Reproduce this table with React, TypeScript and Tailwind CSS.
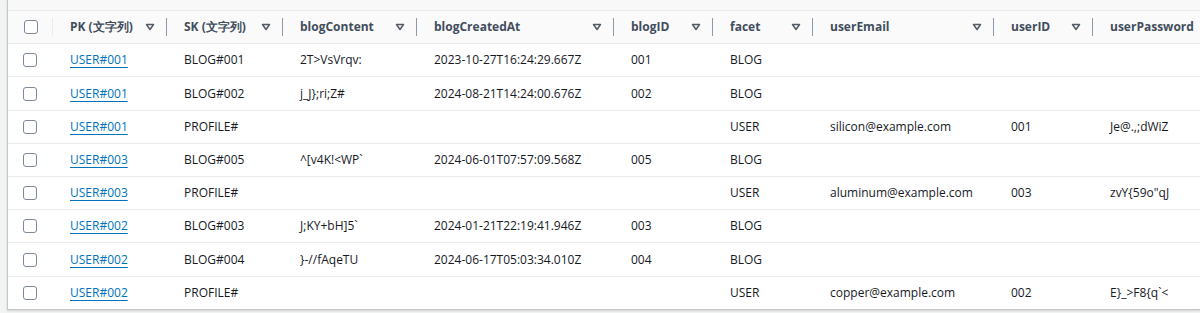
const cols = [
  { key: 'pk', label: 'PK (文字列)', w: 114 },
  { key: 'sk', label: 'SK (文字列)', w: 116 },
  { key: 'blogContent', label: 'blogContent', w: 134 },
  { key: 'blogCreatedAt', label: 'blogCreatedAt', w: 197 },
  { key: 'blogID', label: 'blogID', w: 99 },
  { key: 'facet', label: 'facet', w: 100 },
  { key: 'userEmail', label: 'userEmail', w: 181 },
  { key: 'userID', label: 'userID', w: 99 },
  { key: 'userPassword', label: 'userPassword', w: 160 },
]

const rows: Record<string, string>[] = [
  { pk: 'USER#001', sk: 'BLOG#001', blogContent: '2T>VsVrqv:', blogCreatedAt: '2023-10-27T16:24:29.667Z', blogID: '001', facet: 'BLOG' },
  { pk: 'USER#001', sk: 'BLOG#002', blogContent: 'j_J};ri;Z#', blogCreatedAt: '2024-08-21T14:24:00.676Z', blogID: '002', facet: 'BLOG' },
  { pk: 'USER#001', sk: 'PROFILE#', facet: 'USER', userEmail: 'silicon@example.com', userID: '001', userPassword: 'Je@.,;dWiZ' },
  { pk: 'USER#003', sk: 'BLOG#005', blogContent: '^[v4K!<WP`', blogCreatedAt: '2024-06-01T07:57:09.568Z', blogID: '005', facet: 'BLOG' },
  { pk: 'USER#003', sk: 'PROFILE#', facet: 'USER', userEmail: 'aluminum@example.com', userID: '003', userPassword: 'zvY{59o"qJ' },
  { pk: 'USER#002', sk: 'BLOG#003', blogContent: 'J;KY+bH]5`', blogCreatedAt: '2024-01-21T22:19:41.946Z', blogID: '003', facet: 'BLOG' },
  { pk: 'USER#002', sk: 'BLOG#004', blogContent: '}-//fAqeTU', blogCreatedAt: '2024-06-17T05:03:34.010Z', blogID: '004', facet: 'BLOG' },
  { pk: 'USER#002', sk: 'PROFILE#', facet: 'USER', userEmail: 'copper@example.com', userID: '002', userPassword: 'E}_>F8{q`<' },
]

// row heights, measured off the screenshot
const rowH = ['h-[33px]', 'h-[34px]', 'h-[33px]', 'h-[33px]', 'h-[33px]', 'h-[33px]', 'h-[34px]', 'h-[33px]']

function Caret() {
  return (
    <svg width="10" height="8" viewBox="0 0 10 8" className="block shrink-0">
      <path d="M1.5 1.5 H8.5 L5 6.5 Z" fill="none" stroke="#545b64" strokeWidth="1.5" strokeLinejoin="round" />
    </svg>
  )
}

function Box() {
  return <span className="block h-[14px] w-[14px] rounded-[3px] border-[1.5px] border-[#7d8998] bg-white" />
}

export default function App() {
  return (
    <div className="h-[313px] w-[1200px] overflow-hidden bg-[#f2f3f3] font-['Open_Sans',sans-serif] text-[12px]">
      <div className="ml-[7px] h-[310px] overflow-hidden border-b border-l border-[#c6c6cd] bg-white shadow-[0_1px_2px_rgba(0,0,0,0.15)]">
        <div className="h-[11px] border-b border-[#e9ebed] bg-[#f8f8f8]" />
        <table className="table-fixed border-collapse whitespace-nowrap" style={{ width: 1245 }}>
          <colgroup>
            <col style={{ width: 45 }} />
            {cols.map((c) => (
              <col key={c.key} style={{ width: c.w }} />
            ))}
          </colgroup>
          <thead>
            <tr className="h-[32px] border-b border-[#e9ebed] bg-[#fafafa]">
              <th className="p-0">
                <div className="flex h-[32px] items-center">
                  <div className="flex flex-1 justify-center pl-[2px]">
                    <Box />
                  </div>
                  <span className="h-[18px] w-px bg-[#e9ebed]" />
                </div>
              </th>
              {cols.map((c) => (
                <th key={c.key} className="p-0 text-left">
                  <div className="flex h-[32px] items-center">
                    <span className="flex-1 pl-[17px] font-bold text-[#414d5c]">{c.label}</span>
                    {c.key !== 'userPassword' && (
                      <>
                        <span className="mr-[11px]"><Caret /></span>
                        <span className="h-[18px] w-px bg-[#8d99a8]" />
                      </>
                    )}
                  </div>
                </th>
              ))}
            </tr>
          </thead>
          <tbody>
            {rows.map((r, i) => (
              <tr key={i} className={`${rowH[i]} ${i < rows.length - 1 ? 'border-b border-[#e9ebed]' : ''}`}>
                <td className="p-0">
                  <div className="flex justify-center pr-[1px]">
                    <Box />
                  </div>
                </td>
                {cols.map((c) => (
                  <td key={c.key} className="p-0 pl-[17px] text-[#16191f]">
                    {c.key === 'pk' ? (
                      <a className="text-[#0073bb] underline decoration-1 underline-offset-[3px]">{r.pk}</a>
                    ) : (
                      r[c.key] ?? ''
                    )}
                  </td>
                ))}
              </tr>
            ))}
          </tbody>
        </table>
      </div>
    </div>
  )
}
